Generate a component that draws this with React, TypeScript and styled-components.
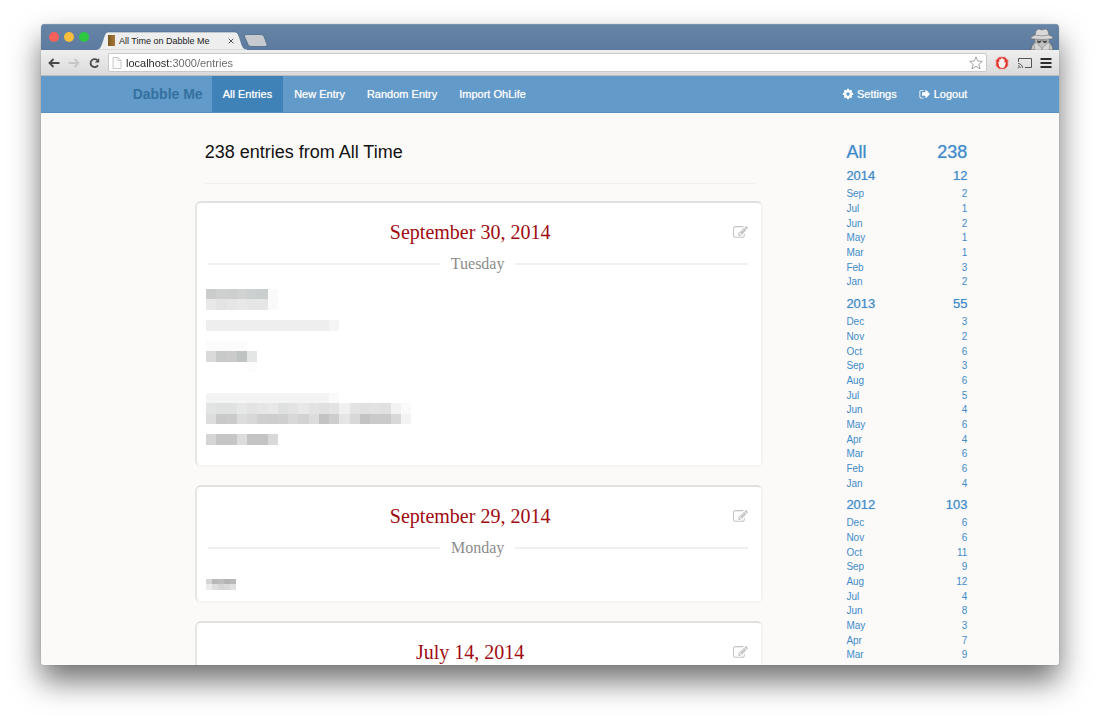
import React from "react";
import styled, { createGlobalStyle } from "styled-components";

const GlobalStyle = createGlobalStyle`
  *, *::before, *::after { box-sizing: border-box; }
  body {
    margin: 0;
    background: #fff;
    font-family: "Liberation Sans", Arial, Helvetica, sans-serif;
    color: #111;
  }
  button, input { font: inherit; border: 0; padding: 0; background: none; }
  a { text-decoration: none; color: inherit; }
  ul { list-style: none; margin: 0; padding: 0; }
  svg { display: block; flex: none; }
`;

const Desktop = styled.div`
  height: 100vh;
  padding: 24px 41px 59px;
  overflow: hidden;
`;

const Window = styled.div`
  height: 100%;
  display: flex;
  flex-direction: column;
  overflow: hidden;
  border-radius: 4px 4px 2px 2px;
  background: #fbfaf8;
  box-shadow: 0 0 1px rgba(0, 0, 0, 0.4), 0 16px 30px rgba(0, 0, 0, 0.56);
`;

/* ---------- browser chrome ---------- */

const TitleBar = styled.div`
  display: flex;
  align-items: flex-end;
  flex: none;
  height: 26px;
  padding: 0 4px 0 8px;
  background: linear-gradient(#6684a5, #5c7b9f);
  box-shadow: inset 0 1px 0 #7c95b1;
`;

const Lights = styled.div`
  display: flex;
  gap: 5px;
  padding-bottom: 8px;
`;

const Light = styled.button<{ $color: string }>`
  width: 10px;
  height: 10px;
  border-radius: 50%;
  background: ${(p) => p.$color};
`;

const Tab = styled.div`
  position: relative;
  display: flex;
  align-items: center;
  width: 150px;
  height: 19px;
  margin-left: 8px;
  padding: 0 13px 0 11px;
`;

const TabShape = styled.svg`
  position: absolute;
  inset: 0;
  width: 100%;
  height: 100%;
`;

const Favicon = styled.span`
  position: relative;
  width: 7px;
  height: 11px;
  background: linear-gradient(90deg, #7d5a20, #a6793a);
`;

const TabTitle = styled.span`
  position: relative;
  flex: 1;
  margin-left: 4px;
  font-size: 9px;
  line-height: 12px;
  color: #222;
  white-space: nowrap;
`;

const IconButton = styled.button`
  position: relative;
  display: flex;
  align-items: center;
  justify-content: center;
  flex: none;
`;

const NewTab = styled.button`
  margin: 0 auto 3px -4px;
`;

const Toolbar = styled.div`
  display: flex;
  align-items: center;
  flex: none;
  gap: 8px;
  height: 26px;
  padding: 0 7px;
  background: linear-gradient(#efefef, #dadada);
  border-bottom: 1px solid #b9bdc2;
`;

const Omnibox = styled.label`
  display: flex;
  align-items: center;
  flex: 1;
  gap: 4px;
  height: 19px;
  padding: 0 3px;
  background: #fff;
  border: 1px solid #c8c8c8;
  border-radius: 2px;
`;

const Address = styled.input`
  flex: 1;
  min-width: 0;
  height: 15px;
  font-size: 11px;
  color: transparent;
  background: linear-gradient(90deg, #222 45px, #666 45px);
  background-clip: text;
  -webkit-background-clip: text;
`;

/* ---------- site ---------- */

const NavBar = styled.nav`
  flex: none;
  background: #629aca;
  border-bottom: 1px solid #5a8fbd;
`;

const Container = styled.div`
  display: flex;
  width: 82%;
  margin: 0 auto;
`;

const Brand = styled.a`
  margin-right: 9px;
  font-size: 14px;
  font-weight: 700;
  line-height: 36px;
  color: #35719f;
`;

const NavLink = styled.a<{ $active?: boolean }>`
  padding: 0 11px;
  font-size: 11px;
  line-height: 36px;
  color: #fff;
  text-shadow: 0 0 1px rgba(255, 255, 255, 0.7);
  background: ${(p) => (p.$active ? "#3e82b8" : "transparent")};
`;

const NavTools = styled.div`
  display: flex;
  gap: 22px;
  margin-left: auto;
`;

const ToolLink = styled(NavLink)`
  display: flex;
  align-items: center;
  gap: 3px;
  padding: 0;
`;

const Page = styled.div`
  flex: 1;
  min-height: 0;
  overflow: hidden;
`;

const Columns = styled(Container)`
  justify-content: space-between;
  gap: 40px;
  padding-top: 26px;
`;

const Main = styled.main`
  width: 568px;
  margin-left: 62px;
`;

const PageTitle = styled.h1`
  margin: 0 8px 17px 10px;
  padding-bottom: 18px;
  border-bottom: 1px solid #f0efed;
  font-size: 18px;
  font-weight: 400;
  line-height: 26px;
  color: #111;
`;

const Card = styled.article`
  min-height: 118px;
  margin-bottom: 18px;
  padding: 14px 13px 10px 11px;
  background: #fff;
  border: 2px solid;
  border-color: #e0e0df #f4f3f2 #f5f4f3 #e5e5e4;
  border-radius: 6px;
`;

const CardHead = styled.header`
  display: flex;
  align-items: center;
  height: 30px;
`;

const DateLink = styled.h2`
  flex: 1;
  margin: 0;
  text-align: center;
  font-family: "Liberation Serif", Georgia, serif;
  font-size: 20px;
  font-weight: 400;
  line-height: 30px;
  color: #a00b10;
`;

const Weekday = styled.div`
  display: flex;
  align-items: center;
  gap: 11px;
  margin-bottom: 8px;
  font-family: "Liberation Serif", Georgia, serif;
  font-size: 16px;
  line-height: 34px;
  color: #8c8c8c;

  &::before, &::after {
    content: "";
    flex: 1;
    height: 2px;
    background: #f0f0f0;
  }
`;

const MosaicArt = styled.svg`
  margin-left: -2px;
`;

const Sidebar = styled.aside`
  width: 121px;
  color: #428bca;
`;

const AllRow = styled.a`
  display: flex;
  justify-content: space-between;
  font-size: 18px;
  line-height: 26px;
  text-shadow: 0 0 1px rgba(66, 139, 202, 0.6);
`;

const YearGroup = styled.section`
  & + & { margin-top: 4px; }
`;

const YearRow = styled(AllRow)`
  font-size: 13px;
  line-height: 21px;
`;

const Month = styled.li`
  height: 15px;
  font-size: 10px;
  line-height: 15px;

  &:nth-child(3n) { height: 14px; }
`;

const MonthLink = styled.a`
  display: flex;
  justify-content: space-between;
`;

/* ---------- data ---------- */

type Run = [row: number, col: number, shades: string[]];
const rep = (shade: string, n: number) => Array<string>(n).fill(shade);

const longNote: Run[] = [
  [0, 0, ["#cbcdcd", "#cfd1d1", "#cdcfcf", "#d1d3d3", "#cdd0d0", "#cbcece", "#fafafa"]],
  [1, 0, ["#e8e8e8", "#e3e3e3", "#e6e6e6", "#e8e8e8", "#e6e6e6", "#e6e6e6", "#fafafa"]],
  [3, 0, [...rep("#eeeeee", 12), "#f5f5f5"]],
  [5, 0, rep("#fbfbfb", 4)],
  [6, 0, ["#dadada", "#c8caca", "#cbcbcb", "#bfc3c2", "#e3e6e5"]],
  [7, 4, ["#fcfcfc"]],
  [10, 0, [...rep("#f4f4f4", 12), "#fafafa"]],
  [11, 0, ["#e2e4e4", "#e0e2e2", "#e0e2e2", "#e6e8e7", "#e3e3e3", "#e6e6e6", "#e8e8e8", "#dfe1e1", "#e3e3e3", "#e8e8e8", "#e3e3e3", "#e0e0e0", "#e3e3e3", "#f0f0f0", "#e3e3e3", "#e0e0e0", "#e2e2e2", "#e0e0e0", "#f2f2f2", "#fafafa"]],
  [12, 0, ["#dddddd", "#c9c9c9", "#cbcbcb", "#dcdcdc", "#d8d8d8", "#cfcfcf", "#cdcdcd", "#cfcfcf", "#d8d8d8", "#d3d3d3", "#dcdcdc", "#c3c3c3", "#cdcdcd", "#e5e5e5", "#d8d8d8", "#c3c3c3", "#cacaca", "#cacaca", "#d8d8d8", "#f3f3f3"]],
  [14, 0, ["#d5d5d5", "#c6c6c6", "#c6c6c6", "#dcdcdc", "#c4c4c4", "#c4c4c4", "#d8d8d8"]],
];

const shortNote: Run[] = [
  [1, 0, ["#d6d6d6", "#b9b9b9", "#bdbdbd", "#b4b4b4", "#b9b9b9"]],
  [2, 0, ["#ececec", "#dedede", "#d6d6d6", "#d9d9d9", "#e0e0e0"]],
];

const years = [
  { year: "2014", total: 12, months: "Sep 2,Jul 1,Jun 2,May 1,Mar 1,Feb 3,Jan 2" },
  { year: "2013", total: 55, months: "Dec 3,Nov 2,Oct 6,Sep 3,Aug 6,Jul 5,Jun 4,May 6,Apr 4,Mar 6,Feb 6,Jan 4" },
  { year: "2012", total: 103, months: "Dec 6,Nov 6,Oct 11,Sep 9,Aug 12,Jul 4,Jun 8,May 3,Apr 7,Mar 9" },
];

/* ---------- pieces ---------- */

const Mosaic = ({ runs, cols, rows, width, height }: { runs: Run[]; cols: number; rows: number; width: number; height: number }) => (
  <MosaicArt width={width} height={height} viewBox={`0 0 ${cols} ${rows}`} preserveAspectRatio="none" shapeRendering="crispEdges" aria-hidden>
    {runs.map(([row, col, shades]) =>
      shades.map((fill, i) => <rect key={`${row}-${i}`} x={col + i} y={row} width="1" height="1" fill={fill} />)
    )}
  </MosaicArt>
);

const Glyph = ({ d, size, color }: { d: string; size: number; color: string }) => (
  <svg width={size} height={size} viewBox="0 0 1792 1792" fill={color} aria-hidden>
    <path d={d} />
  </svg>
);

const COG =
  "M1152 896q0-106-75-181t-181-75-181 75-75 181 75 181 181 75 181-75 75-181zm512-109v222q0 12-8 23t-20 13l-185 28q-19 54-39 91 35 50 107 138 10 12 10 25t-9 23q-27 37-99 108t-94 71q-12 0-26-9l-138-108q-44 23-91 38-16 136-29 186-7 28-36 28h-222q-14 0-24.5-8.5t-11.5-21.5l-28-184q-49-16-90-37l-141 107q-10 9-25 9-14 0-25-11-126-114-165-168-7-10-7-23 0-12 8-23 15-21 51-66.5t54-70.5q-27-50-41-99l-183-27q-13-2-21-12.5t-8-23.5v-222q0-12 8-23t19-13l186-28q14-46 39-92-40-57-107-138-10-12-10-24 0-10 9-23 26-36 98.5-107.5t94.5-71.5q13 0 26 10l138 107q44-23 91-38 16-136 29-186 7-28 36-28h222q14 0 24.5 8.5t11.5 21.5l28 184q49 16 90 37l142-107q9-9 24-9 13 0 25 10 129 119 165 170 7 8 7 22 0 12-8 23-15 21-51 66.5t-54 70.5q26 50 41 98l183 28q13 2 21 12.5t8 23.5z";
const SIGN_OUT =
  "M704 1472q0 4 1 20t.5 26.5-3 23.5-10 19.5-20.5 6.5h-320q-119 0-203.5-84.5t-84.5-203.5v-704q0-119 84.5-203.5t203.5-84.5h320q13 0 22.5 9.5t9.5 22.5q0 4 1 20t.5 26.5-3 23.5-10 19.5-20.5 6.5h-320q-66 0-113 47t-47 113v704q0 66 47 113t113 47h312l11.5 1 11.5 3 8 5.5 7 9 2 13.5zm928-576q0 26-19 45l-544 544q-19 19-45 19t-45-19-19-45v-288h-448q-26 0-45-19t-19-45v-384q0-26 19-45t45-19h448v-288q0-26 19-45t45-19 45 19l544 544q19 19 19 45z";
const EDIT =
  "M888 1184l116-116-152-152-116 116v56h96v96h56zm440-720q-16-16-33 1l-350 350q-17 17-1 33t33-1l350-350q17-17 1-33zm80 594v190q0 119-84.5 203.5t-203.5 84.5h-832q-119 0-203.5-84.5t-84.5-203.5v-832q0-119 84.5-203.5t203.5-84.5h832q63 0 117 25 15 7 18 23 3 17-9 29l-49 49q-14 14-32 8-23-6-45-6h-832q-66 0-113 47t-47 113v832q0 66 47 113t113 47h832q66 0 113-47t47-113v-126q0-13 9-22l64-64q15-15 35-7t20 29zm-96-738l288 288-672 672h-288v-288zm444 132l-92 92-288-288 92-92q28-28 68-28t68 28l152 152q28 28 28 68t-28 68z";

const Incognito = () => (
  <svg width="26" height="22" viewBox="0 0 26 22" aria-hidden>
    <path d="M2 22 C2 18 4 15 8 14 L18 14 C22 15 24 18 24 22 Z" fill="#c4c4c4" stroke="#50565e" strokeWidth="0.7" />
    <path d="M6 9 H20 V14 Q18 20 13 20 Q8 20 6 14 Z" fill="#c2c2c2" stroke="#777" strokeWidth="0.5" />
    <path d="M5 15 L8 15 Q9 18 12 19 L13 22 H6 Z M21 15 L18 15 Q17 18 14 19 L13 22 H20 Z" fill="#d6d6d6" stroke="#888" strokeWidth="0.5" />
    <path d="M7 3 Q8 1 10 1 L13 2 L16 1 Q18 1 19 3 L20 7 L24 9 Q25 11 21 11 Q13 12 5 11 Q1 11 2 9 L6 7 Z" fill="#d8d8d8" stroke="#666" strokeWidth="0.6" />
    <path d="M6 7 Q13 9 20 7" fill="none" stroke="#999" strokeWidth="1" />
    <path d="M7.5 12.6 L12 13 Q12 15.4 9.8 15.2 Q8 15 7.5 12.6 Z M18.5 12.6 L14 13 Q14 15.4 16.2 15.2 Q18 15 18.5 12.6 Z" fill="#4a4c50" />
    <path d="M11 13 H15" stroke="#4a4c50" strokeWidth="0.8" />
  </svg>
);

const Entry = ({ date, day, children }: { date: string; day?: string; children?: React.ReactNode }) => (
  <Card>
    <CardHead>
      <DateLink>{date}</DateLink>
      <IconButton aria-label={`Edit ${date}`}>
        <Glyph d={EDIT} size={15} color="#c4c4c4" />
      </IconButton>
    </CardHead>
    {day && <Weekday>{day}</Weekday>}
    {children}
  </Card>
);

const Chrome = () => (
  <>
    <TitleBar>
      <Lights>
        <Light $color="#f9605a" aria-label="Close window" />
        <Light $color="#f8bd3a" aria-label="Minimize window" />
        <Light $color="#2bc840" aria-label="Zoom window" />
      </Lights>
      <Tab>
        <TabShape viewBox="0 0 150 19" preserveAspectRatio="none" aria-hidden>
          <path d="M0 19 C3 18 4 15 6 9 C8 2 9 1 12 1 H137 C140 1 141 2 143 8 C145 15 146 18 150 19 Z" fill="#eeeeee" stroke="#4f6b8a" strokeWidth="0.6" />
          <path d="M0 18.5 H150 V19 H0 Z" fill="#eeeeee" />
        </TabShape>
        <Favicon />
        <TabTitle>All Time on Dabble Me</TabTitle>
        <IconButton aria-label="Close tab">
          <svg width="6" height="6" viewBox="0 0 6 6" stroke="#555" strokeWidth="1">
            <path d="M0.7 0.7 L5.3 5.3 M5.3 0.7 L0.7 5.3" />
          </svg>
        </IconButton>
      </Tab>
      <NewTab aria-label="New tab">
        <svg width="25" height="13" viewBox="0 0 25 13">
          <path d="M3 0.5 H18 Q20 0.5 21 2.5 L24 10.5 Q24.5 12.5 22 12.5 H8 Q6 12.5 5 10.5 L1.5 2.5 Q1 0.5 3 0.5 Z" fill="#c6c9cd" stroke="#4d6988" strokeWidth="0.8" />
        </svg>
      </NewTab>
      <Incognito />
    </TitleBar>
    <Toolbar>
      <IconButton aria-label="Back">
        <svg width="12" height="12" viewBox="0 0 12 12" fill="none" stroke="#4a4a4a" strokeWidth="1.8">
          <path d="M11.5 6 H1.5 M5.5 2 L1.5 6 L5.5 10" />
        </svg>
      </IconButton>
      <IconButton aria-label="Forward">
        <svg width="12" height="12" viewBox="0 0 12 12" fill="none" stroke="#c6c6c6" strokeWidth="1.8">
          <path d="M0.5 6 H10.5 M6.5 2 L10.5 6 L6.5 10" />
        </svg>
      </IconButton>
      <IconButton aria-label="Reload">
        <svg width="12" height="12" viewBox="0 0 12 12" fill="none" stroke="#4a4a4a" strokeWidth="1.8">
          <path d="M10 8.2 A4 4 0 1 1 9.4 3.2" />
          <path d="M11.2 1 V5.4 H6.8 Z" fill="#4a4a4a" stroke="none" />
        </svg>
      </IconButton>
      <Omnibox>
        <svg width="10" height="12" viewBox="0 0 10 12" fill="#fafafa" stroke="#c4c4c4" strokeWidth="0.9">
          <path d="M1 0.5 H6 L9 3.5 V11.5 H1 Z M6 0.5 V3.5 H9" />
        </svg>
        <Address aria-label="Address" defaultValue="localhost:3000/entries" />
        <IconButton aria-label="Bookmark this page">
          <svg width="14" height="14" viewBox="0 0 14 14" fill="#fff" stroke="#9a9a9a" strokeWidth="0.9">
            <path d="M7 0.8 L8.8 5 L13.3 5.3 L9.9 8.2 L11 12.8 L7 10.3 L3 12.8 L4.1 8.2 L0.7 5.3 L5.2 5 Z" />
          </svg>
        </IconButton>
      </Omnibox>
      <IconButton aria-label="Content blocker">
        <svg width="14" height="14" viewBox="0 0 14 14">
          <path d="M4.2 1 H9.8 L13 4.2 V9.8 L9.8 13 H4.2 L1 9.8 V4.2 Z" fill="#e2332b" stroke="#f0a8a4" strokeWidth="0.8" />
          <path d="M4 10 L3.2 6 Q3.6 5 4.3 6 V3.6 Q5 2.6 5.7 3.4 Q6.2 2 7 2.2 Q7.9 2 8.2 3.3 Q9.4 2.6 9.6 3.8 V7 Q10.5 5.8 11 6.8 L9.8 10.4 Q9 12 7 12 Q4.8 12 4 10 Z" fill="#f8efee" />
        </svg>
      </IconButton>
      <IconButton aria-label="Cast">
        <svg width="15" height="12" viewBox="0 0 15 12" fill="none" stroke="#555" strokeWidth="1">
          <path d="M1.5 5 V1.5 H14.5 V10.5 H8" />
          <path d="M1 6.5 A4.5 4.5 0 0 1 5.5 11 M1 8.8 A2.2 2.2 0 0 1 3.2 11" />
          <circle cx="1.2" cy="10.8" r="0.6" fill="#555" stroke="none" />
        </svg>
      </IconButton>
      <IconButton aria-label="Menu">
        <svg width="12" height="10" viewBox="0 0 12 10" stroke="#2c2c2c" strokeWidth="2">
          <path d="M0.5 1 H11.5 M0.5 5 H11.5 M0.5 9 H11.5" />
        </svg>
      </IconButton>
    </Toolbar>
  </>
);

export default function App() {
  return (
    <Desktop>
      <GlobalStyle />
      <Window>
        <Chrome />
        <NavBar>
          <Container>
            <Brand href="#">Dabble Me</Brand>
            <NavLink href="#" $active>All Entries</NavLink>
            <NavLink href="#">New Entry</NavLink>
            <NavLink href="#">Random Entry</NavLink>
            <NavLink href="#">Import OhLife</NavLink>
            <NavTools>
              <ToolLink href="#">
                <Glyph d={COG} size={12} color="#fff" />
                Settings
              </ToolLink>
              <ToolLink href="#">
                <Glyph d={SIGN_OUT} size={12} color="#fff" />
                Logout
              </ToolLink>
            </NavTools>
          </Container>
        </NavBar>
        <Page>
          <Columns>
            <Main>
              <PageTitle>238 entries from All Time</PageTitle>
              <Entry date="September 30, 2014" day="Tuesday">
                <Mosaic runs={longNote} cols={20} rows={16} width={205} height={166} />
              </Entry>
              <Entry date="September 29, 2014" day="Monday">
                <Mosaic runs={shortNote} cols={5} rows={3} width={30} height={17} />
              </Entry>
              <Entry date="July 14, 2014" />
            </Main>
            <Sidebar>
              <AllRow href="#">
                <span>All</span>
                <span>238</span>
              </AllRow>
              {years.map(({ year, total, months }) => (
                <YearGroup key={year}>
                  <YearRow href="#">
                    <span>{year}</span>
                    <span>{total}</span>
                  </YearRow>
                  <ul>
                    {months.split(",").map((item) => {
                      const [name, count] = item.split(" ");
                      return (
                        <Month key={name}>
                          <MonthLink href="#">
                            <span>{name}</span>
                            <span>{count}</span>
                          </MonthLink>
                        </Month>
                      );
                    })}
                  </ul>
                </YearGroup>
              ))}
            </Sidebar>
          </Columns>
        </Page>
      </Window>
    </Desktop>
  );
}
